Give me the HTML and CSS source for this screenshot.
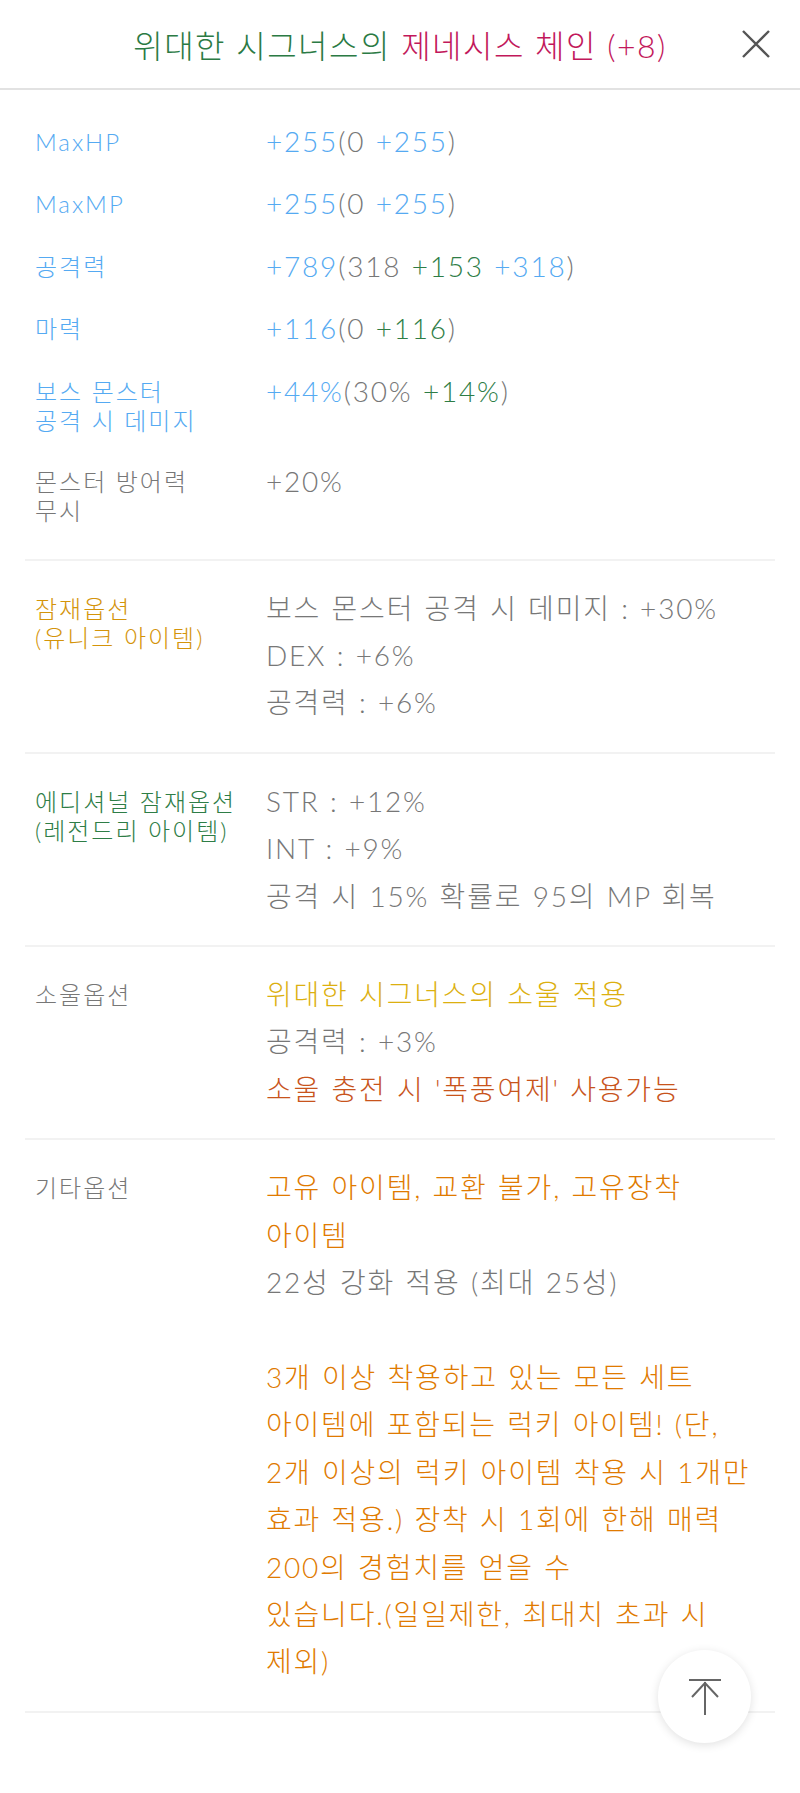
FILE: index.html
```html
<!DOCTYPE html>
<html lang="ko">
<head>
    <meta charset="UTF-8">
    <meta name="viewport" content="width=device-width, initial-scale=1.0">
    <title>위대한 시그너스의 제네시스 체인</title>
    <link rel="stylesheet" href="styles.css">
</head>
<body>

    <header class="top-bar">
        <span></span>
        <h1 class="item-title">
            <span class="name-set">위대한 시그너스의</span>
            <span class="name-item">제네시스 체인 (+8)</span>
        </h1>
        <button class="close-btn" aria-label="닫기">
            <svg width="30" height="30" viewBox="0 0 30 30">
                <path d="M2 2 L28 28 M28 2 L2 28" stroke="#555" stroke-width="2.4" fill="none"/>
            </svg>
        </button>
    </header>

    <main class="detail">
        <section class="opt-group">
            <div class="opt-row">
                <div class="opt-label up">MaxHP</div>
                <div class="opt-value"><span class="total">+255</span>(0 <span class="total">+255</span>)</div>
            </div>
            <div class="opt-row">
                <div class="opt-label up">MaxMP</div>
                <div class="opt-value"><span class="total">+255</span>(0 <span class="total">+255</span>)</div>
            </div>
            <div class="opt-row">
                <div class="opt-label up">공격력</div>
                <div class="opt-value"><span class="total">+789</span>(318 <span class="add">+153</span> <span class="total">+318</span>)</div>
            </div>
            <div class="opt-row">
                <div class="opt-label up">마력</div>
                <div class="opt-value"><span class="total">+116</span>(0 <span class="add">+116</span>)</div>
            </div>
            <div class="opt-row">
                <div class="opt-label up">보스 몬스터<br>공격 시 데미지</div>
                <div class="opt-value"><span class="total">+44%</span>(30% <span class="add">+14%</span>)</div>
            </div>
            <div class="opt-row">
                <div class="opt-label">몬스터 방어력<br>무시</div>
                <div class="opt-value">+20%</div>
            </div>
        </section>

        <section class="opt-group">
            <div class="opt-row">
                <div class="opt-label unique">잠재옵션<br>(유니크 아이템)</div>
                <div class="opt-value">
                    <p>보스 몬스터 공격 시 데미지 : +30%</p>
                    <p>DEX : +6%</p>
                    <p>공격력 : +6%</p>
                </div>
            </div>
        </section>

        <section class="opt-group">
            <div class="opt-row">
                <div class="opt-label legend">에디셔널 잠재옵션<br>(레전드리 아이템)</div>
                <div class="opt-value">
                    <p>STR : +12%</p>
                    <p>INT : +9%</p>
                    <p>공격 시 15% 확률로 95의 MP 회복</p>
                </div>
            </div>
        </section>

        <section class="opt-group">
            <div class="opt-row">
                <div class="opt-label">소울옵션</div>
                <div class="opt-value">
                    <p class="soul-name">위대한 시그너스의 소울 적용</p>
                    <p>공격력 : +3%</p>
                    <p class="soul-skill">소울 충전 시 '폭풍여제' 사용가능</p>
                </div>
            </div>
        </section>

        <section class="opt-group">
            <div class="opt-row">
                <div class="opt-label">기타옵션</div>
                <div class="opt-value">
                    <p class="notice">고유 아이템, 교환 불가, 고유장착<br>아이템</p>
                    <p>22성 강화 적용 (최대 25성)</p>
                    <p class="notice gap-before">3개 이상 착용하고 있는 모든 세트<br>아이템에 포함되는 럭키 아이템! (단,<br>2개 이상의 럭키 아이템 착용 시 1개만<br>효과 적용.) 장착 시 1회에 한해 매력<br>200의 경험치를 얻을 수<br>있습니다.(일일제한, 최대치 초과 시<br>제외)</p>
                </div>
            </div>
        </section>
    </main>

    <button class="to-top" aria-label="맨 위로">
        <svg width="34" height="38" viewBox="0 0 34 38">
            <path d="M1 2 H33 M17 4 V37 M4 19 L17 5 L30 19" stroke="#666" stroke-width="2" fill="none"/>
        </svg>
    </button>

</body>
</html>
```

FILE: styles.css
```css
body {
    font-family: "Lato", "Noto Sans CJK KR", sans-serif;
    font-weight: 300;
    background-color: #fff;
    color: #777;
    margin: 0;
    padding: 0;
}

.top-bar {
    height: 88px;
    display: grid;
    grid-template-columns: 1fr auto 1fr;
    align-items: center;
    background: white;
    border-bottom: 2px solid #e2e2e2;
}

.item-title {
    margin: 0;
    font-size: 32px;
    font-weight: 300;
    letter-spacing: 1.5px;
    white-space: nowrap;
}

.name-set {
    color: #2b7a44;
}

.name-item {
    color: #c2185b;
}

.close-btn {
    justify-self: end;
    margin-right: 28px;
    background: none;
    border: none;
    padding: 0;
    width: 32px;
    height: 32px;
    display: flex;
    align-items: center;
    justify-content: center;
    cursor: pointer;
}

.detail {
    margin: 0 25px;
    padding-top: 4px;
}

.opt-group {
    padding: 24px 0 25px 10px;
    border-bottom: 2px solid #f2f2f2;
    display: flex;
    flex-direction: column;
    gap: 15px;
}

.opt-row {
    display: flex;
}

.opt-label {
    width: 231px;
    flex-shrink: 0;
    font-size: 24px;
    line-height: 29px;
    letter-spacing: 2px;
    padding: 9px 0 8.5px;
    color: #777;
}

.opt-label.up {
    color: #55aaf2;
}

.opt-label.unique {
    color: #d4940a;
}

.opt-label.legend {
    color: #2e7d46;
}

.opt-value {
    flex: 1;
    font-size: 28px;
    line-height: 47.4px;
    letter-spacing: 1.8px;
    word-spacing: 1px;
    word-break: keep-all;
    color: #777;
}

.opt-value p {
    margin: 0;
}

.total {
    color: #55aaf2;
}

.add {
    color: #2e7d46;
}

.soul-name {
    color: #dcb010;
}

.soul-skill {
    color: #c8541c;
}

.notice {
    color: #e07a00;
}

.opt-value .gap-before {
    margin-top: 47.4px;
}

.to-top {
    position: fixed;
    right: 49px;
    bottom: 50px;
    width: 93px;
    height: 93px;
    border-radius: 50%;
    border: none;
    background: white;
    box-shadow: 0 2px 10px rgba(0, 0, 0, 0.12);
    display: flex;
    align-items: center;
    justify-content: center;
    padding: 0;
    cursor: pointer;
}
```
